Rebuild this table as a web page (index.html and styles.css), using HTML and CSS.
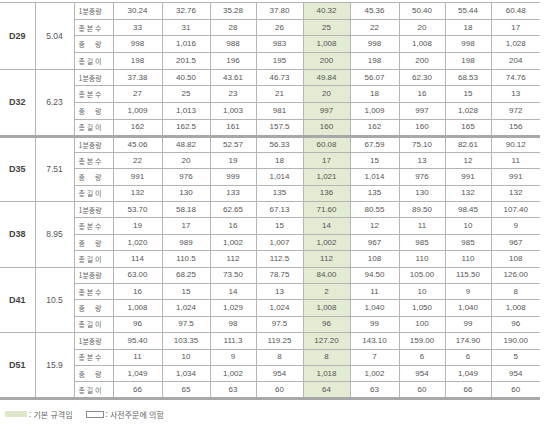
FILE: index.html
```html
<!DOCTYPE html>
<html lang="ko">
<head>
<meta charset="utf-8">
<link rel="stylesheet" href="styles.css">
</head>
<body>
<table class="spec">
<colgroup>
<col class="c-name"><col class="c-unit"><col class="c-lbl">
<col class="c49"><col class="c48"><col class="c46"><col class="c47"><col class="c47"><col class="c49"><col class="c46"><col class="c46"><col class="c49">
</colgroup>
<tbody class="top">
<tr><td class="name" rowspan="4">D29</td><td class="unit" rowspan="4">5.04</td><td class="lbl"><span class="j">1분중량</span></td><td>30.24</td><td>32.76</td><td>35.28</td><td>37.80</td><td class="hl">40.32</td><td>45.36</td><td>50.40</td><td>55.44</td><td>60.48</td></tr>
<tr><td class="lbl"><span class="j"><i>총</i><i>본</i><i>수</i></span></td><td>33</td><td>31</td><td>28</td><td>26</td><td class="hl">25</td><td>22</td><td>20</td><td>18</td><td>17</td></tr>
<tr><td class="lbl"><span class="j"><i>중</i><i>량</i></span></td><td>998</td><td>1,016</td><td>988</td><td>983</td><td class="hl">1,008</td><td>998</td><td>1,008</td><td>998</td><td>1,028</td></tr>
<tr><td class="lbl"><span class="j"><i>총</i><i>길</i><i>이</i></span></td><td>198</td><td>201.5</td><td>196</td><td>195</td><td class="hl">200</td><td>198</td><td>200</td><td>198</td><td>204</td></tr>
<tr><td class="name" rowspan="4">D32</td><td class="unit" rowspan="4">6.23</td><td class="lbl"><span class="j">1분중량</span></td><td>37.38</td><td>40.50</td><td>43.61</td><td>46.73</td><td class="hl">49.84</td><td>56.07</td><td>62.30</td><td>68.53</td><td>74.76</td></tr>
<tr><td class="lbl"><span class="j"><i>총</i><i>본</i><i>수</i></span></td><td>27</td><td>25</td><td>23</td><td>21</td><td class="hl">20</td><td>18</td><td>16</td><td>15</td><td>13</td></tr>
<tr><td class="lbl"><span class="j"><i>중</i><i>량</i></span></td><td>1,009</td><td>1,013</td><td>1,003</td><td>981</td><td class="hl">997</td><td>1,009</td><td>997</td><td>1,028</td><td>972</td></tr>
<tr><td class="lbl"><span class="j"><i>총</i><i>길</i><i>이</i></span></td><td>162</td><td>162.5</td><td>161</td><td>157.5</td><td class="hl">160</td><td>162</td><td>160</td><td>165</td><td>156</td></tr>
</tbody>
<tbody class="bottom">
<tr class="first"><td class="name" rowspan="4">D35</td><td class="unit" rowspan="4">7.51</td><td class="lbl"><span class="j">1분중량</span></td><td>45.06</td><td>48.82</td><td>52.57</td><td>56.33</td><td class="hl">60.08</td><td>67.59</td><td>75.10</td><td>82.61</td><td>90.12</td></tr>
<tr><td class="lbl"><span class="j"><i>총</i><i>본</i><i>수</i></span></td><td>22</td><td>20</td><td>19</td><td>18</td><td class="hl">17</td><td>15</td><td>13</td><td>12</td><td>11</td></tr>
<tr><td class="lbl"><span class="j"><i>중</i><i>량</i></span></td><td>991</td><td>976</td><td>999</td><td>1,014</td><td class="hl">1,021</td><td>1,014</td><td>976</td><td>991</td><td>991</td></tr>
<tr><td class="lbl"><span class="j"><i>총</i><i>길</i><i>이</i></span></td><td>132</td><td>130</td><td>133</td><td>135</td><td class="hl">136</td><td>135</td><td>130</td><td>132</td><td>132</td></tr>
<tr><td class="name" rowspan="4">D38</td><td class="unit" rowspan="4">8.95</td><td class="lbl"><span class="j">1분중량</span></td><td>53.70</td><td>58.18</td><td>62.65</td><td>67.13</td><td class="hl">71.60</td><td>80.55</td><td>89.50</td><td>98.45</td><td>107.40</td></tr>
<tr><td class="lbl"><span class="j"><i>총</i><i>본</i><i>수</i></span></td><td>19</td><td>17</td><td>16</td><td>15</td><td class="hl">14</td><td>12</td><td>11</td><td>10</td><td>9</td></tr>
<tr><td class="lbl"><span class="j"><i>중</i><i>량</i></span></td><td>1,020</td><td>989</td><td>1,002</td><td>1,007</td><td class="hl">1,002</td><td>967</td><td>985</td><td>985</td><td>967</td></tr>
<tr><td class="lbl"><span class="j"><i>총</i><i>길</i><i>이</i></span></td><td>114</td><td>110.5</td><td>112</td><td>112.5</td><td class="hl">112</td><td>108</td><td>110</td><td>110</td><td>108</td></tr>
<tr><td class="name" rowspan="4">D41</td><td class="unit" rowspan="4">10.5</td><td class="lbl"><span class="j">1분중량</span></td><td>63.00</td><td>68.25</td><td>73.50</td><td>78.75</td><td class="hl">84.00</td><td>94.50</td><td>105.00</td><td>115.50</td><td>126.00</td></tr>
<tr><td class="lbl"><span class="j"><i>총</i><i>본</i><i>수</i></span></td><td>16</td><td>15</td><td>14</td><td>13</td><td class="hl">2</td><td>11</td><td>10</td><td>9</td><td>8</td></tr>
<tr><td class="lbl"><span class="j"><i>중</i><i>량</i></span></td><td>1,008</td><td>1,024</td><td>1,029</td><td>1,024</td><td class="hl">1,008</td><td>1,040</td><td>1,050</td><td>1,040</td><td>1,008</td></tr>
<tr><td class="lbl"><span class="j"><i>총</i><i>길</i><i>이</i></span></td><td>96</td><td>97.5</td><td>98</td><td>97.5</td><td class="hl">96</td><td>99</td><td>100</td><td>99</td><td>96</td></tr>
<tr><td class="name" rowspan="4">D51</td><td class="unit" rowspan="4">15.9</td><td class="lbl"><span class="j">1분중량</span></td><td>95.40</td><td>103.35</td><td>111.3</td><td>119.25</td><td class="hl">127.20</td><td>143.10</td><td>159.00</td><td>174.90</td><td>190.00</td></tr>
<tr><td class="lbl"><span class="j"><i>총</i><i>본</i><i>수</i></span></td><td>11</td><td>10</td><td>9</td><td>8</td><td class="hl">8</td><td>7</td><td>6</td><td>6</td><td>5</td></tr>
<tr><td class="lbl"><span class="j"><i>중</i><i>량</i></span></td><td>1,049</td><td>1,034</td><td>1,002</td><td>954</td><td class="hl">1,018</td><td>1,002</td><td>954</td><td>1,049</td><td>954</td></tr>
<tr class="last"><td class="lbl"><span class="j"><i>총</i><i>길</i><i>이</i></span></td><td>66</td><td>65</td><td>63</td><td>60</td><td class="hl">64</td><td>63</td><td>60</td><td>66</td><td>60</td></tr>
</tbody>
</table>
<div class="legend">
  <span class="swatch green"></span><span class="ltext">: 기본 규격임</span>
  <span class="swatch box"></span><span class="ltext">: 사전주문에 의함</span>
</div>
</body>
</html>
```

FILE: styles.css
```css
html, body {
  margin: 0;
  padding: 0;
  background: #ffffff;
}
body {
  width: 550px;
  height: 425px;
  overflow: hidden;
  font-family: "Liberation Sans", "Noto Sans CJK KR", sans-serif;
  color: #555;
}
.spec {
  border-collapse: collapse;
  table-layout: fixed;
  width: 540px;
  margin-top: 2px;
  font-size: 8px;
}
.c-name { width: 35px; }
.c-unit { width: 39px; }
.c-lbl { width: 39px; }
.c49 { width: 49px; }
.c48 { width: 48px; }
.c47 { width: 47px; }
.c46 { width: 46px; }

.spec td {
  padding: 0;
  text-align: center;
  vertical-align: middle;
  border: 1px solid #b4b4b4;
  line-height: 10px;
  white-space: nowrap;
}
.spec td:first-child { border-left: none; }
.spec td:last-child { border-right: none; }
.spec tbody.top tr { height: 16.7px; }
.spec tbody.bottom tr { height: 16.4px; }
.spec tbody.bottom tr.first td { border-top: 3px solid #a8a8a8; }
.spec tbody.bottom tr.last td,
.spec tbody.bottom tr:nth-last-child(4) td.name,
.spec tbody.bottom tr:nth-last-child(4) td.unit { border-bottom: 3px solid #a8a8a8; }

.spec td.name {
  font-weight: bold;
  font-size: 9px;
  color: #444;
}
.spec td.unit {
  font-size: 8.5px;
}
.spec td.hl {
  background: #e3ebd3;
}
.spec td.lbl {
  text-align: left;
  padding-left: 4px;
  font-family: "Noto Sans CJK KR", sans-serif;
  font-size: 7px;
  color: #666;
}
.j {
  display: inline-flex;
  justify-content: space-between;
  width: 23px;
}
.j i { font-style: normal; }

.legend {
  display: flex;
  align-items: center;
  margin-top: 9px;
  padding-left: 5px;
  font-family: "Noto Sans CJK KR", sans-serif;
  font-size: 8px;
  color: #666;
}
.swatch {
  display: inline-block;
  height: 6px;
}
.swatch.green {
  width: 22px;
  background: #dde8c8;
}
.swatch.box {
  width: 16px;
  height: 5px;
  border: 1px solid #888;
  background: #fff;
  margin-left: 13px;
}
.ltext { margin-left: 2px; }
```
